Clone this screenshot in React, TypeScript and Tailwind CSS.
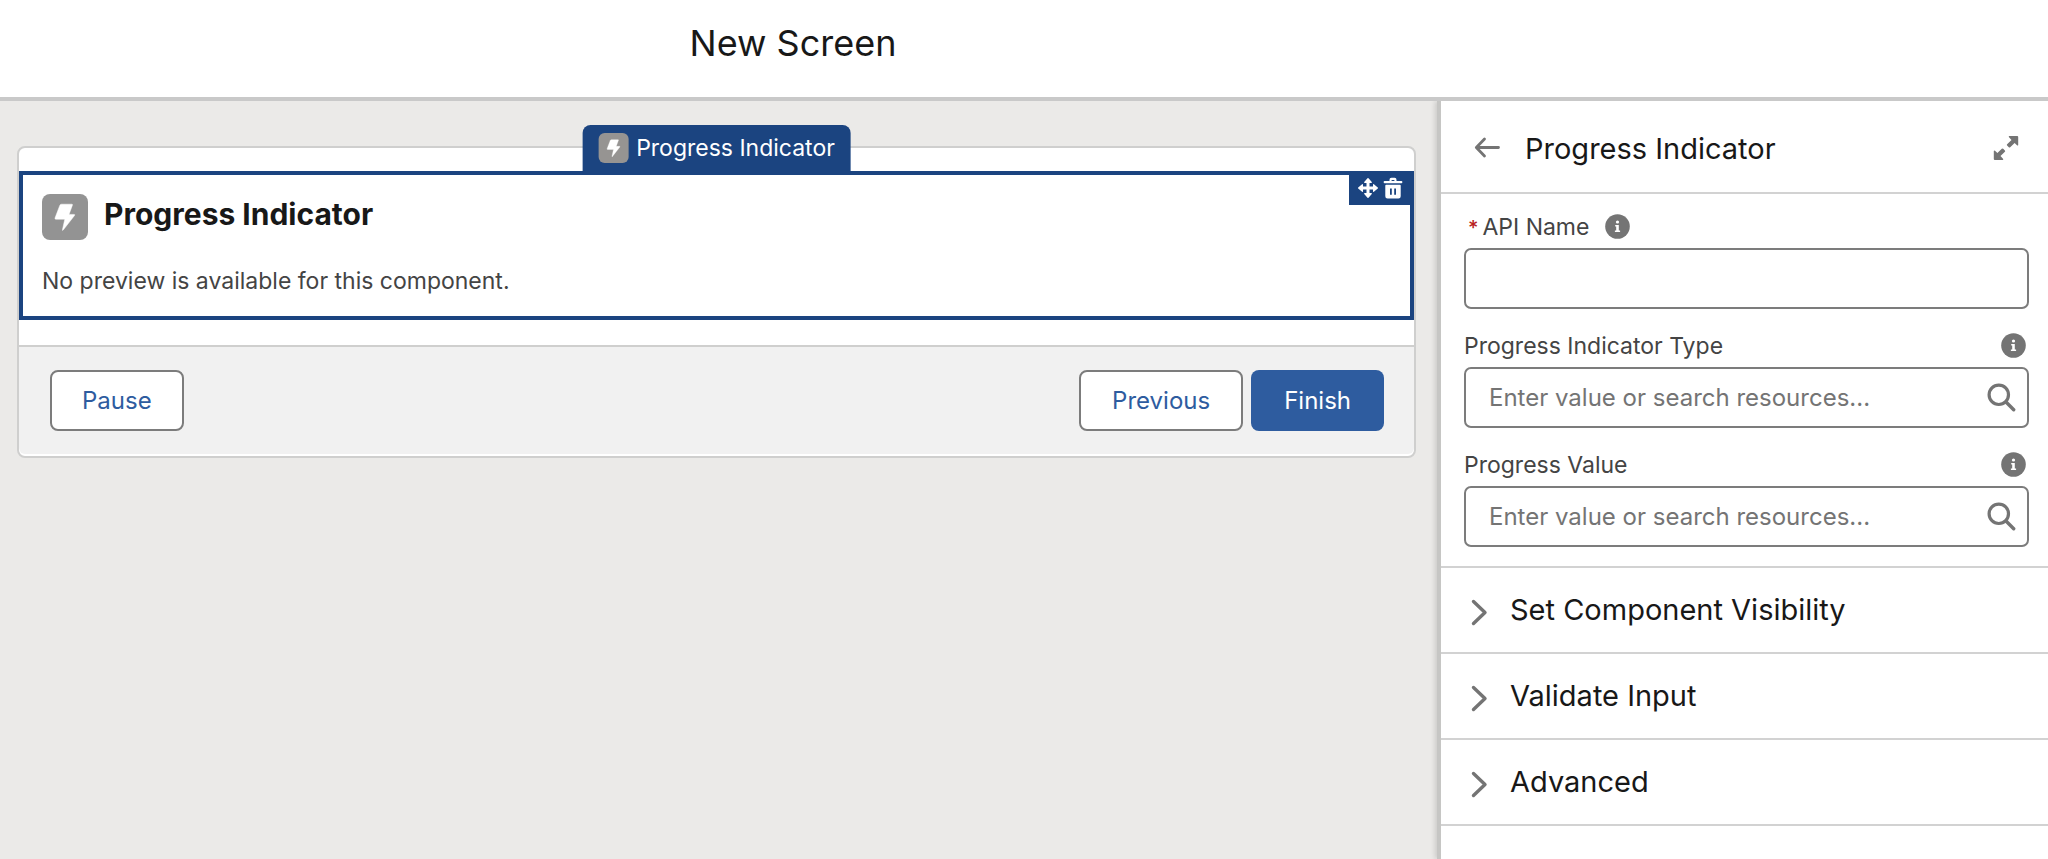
import React from "react";

function BoltIcon({ className }: { className: string }) {
  return (
    <svg viewBox="0 0 46 46" className={className} aria-hidden="true">
      <path
        d="M19.6 10.2h10.2q1 0 .6 1L27 20.4h5q1.200 0 .5 1.100L21.200 36q-1 1-.7-.4L22.800 25.200h-9q-1.200 0-.8-1.100l4.800-12.700q.500-1.200 1.800-1.200z"
        fill="#fff"
        stroke="#fff"
        strokeWidth="0.5"
      />
    </svg>
  );
}

function MoveIcon() {
  return (
    <svg viewBox="0 0 22 22" className="size-[22px]" fill="#fff" aria-hidden="true">
      <path d="M10.500 1.200q.5-.5 1 0l3.300 3.900q.4.900-.5.900h-1.800v3.500H16V7.700q0-1 .9-.5l3.900 3.300q.5.500 0 1l-3.900 3.300q-.9.500-.9-.5v-1.800h-3.500V16h1.800q.9 0 .5.900l-3.300 3.900q-.5.500-1 0l-3.300-3.900Q6.800 16 7.700 16h1.800v-3.500H6v1.800q0 1-.9.500l-3.900-3.300q-.5-.5 0-1l3.900-3.300q.9-.5.9.5v1.800h3.500V6H7.700q-.9 0-.5-.9z" />
    </svg>
  );
}

function TrashIcon() {
  return (
    <svg viewBox="0 0 20 22" className="h-[22px] w-5" fill="#fff" aria-hidden="true">
      <path
        fillRule="evenodd"
        d="M1.500 4h5V2.700Q6.500.8 8.400.8h3.200q1.900 0 1.900 1.900V4h5q.8 0 .8.800v.6q0 .8-.8.800h-17q-.8 0-.8-.8v-.6q0-.8.8-.8zM8.600 4h2.800V2.900H8.600z"
      />
      <path
        fillRule="evenodd"
        d="M3.200 7.700h13.600q.9 0 .9.900v10.600q0 2.200-2.200 2.200h-11q-2.200 0-2.200-2.200V8.600q0-.9.900-.9zM7 11.500v6.300h1.800v-6.300zM11.200 11.500v6.300H13v-6.300z"
      />
    </svg>
  );
}

function BackIcon() {
  return (
    <svg viewBox="0 0 26 22" className="h-[22px] w-[26px]" fill="none" stroke="#747474" strokeWidth="2.800" strokeLinecap="round" strokeLinejoin="round" aria-hidden="true">
      <path d="M24.500 10.500H2.500M10.500 2L2.300 10.500l8.200 8.500" />
    </svg>
  );
}

function ExpandIcon() {
  return (
    <svg viewBox="0 0 26 26" className="size-[26px]" fill="#747474" aria-hidden="true">
      <path d="M16.200 1h8q1 0 1 1v8q-.3 1-1.200.3l-2.400-2.400-4.400 4.400q-.7.600-1.400 0l-1.700-1.700q-.6-.7 0-1.400l4.400-4.300-2.500-2.600Q15.300 1.300 16.200 1z" />
      <path d="M9.800 25h-8q-1 0-1-1v-8q.3-1 1.200-.3l2.400 2.400 4.400-4.400q.7-.6 1.400 0l1.700 1.700q.6.700 0 1.400l-4.400 4.300 2.500 2.600q.7 1-.2 1.300z" />
    </svg>
  );
}

function InfoIcon() {
  return (
    <svg viewBox="0 0 25 25" className="size-[25px]" aria-hidden="true">
      <circle cx="12.500" cy="12.500" r="12.300" fill="#747474" />
      <circle cx="12.500" cy="8" r="1.600" fill="#fff" />
      <path d="M10.200 11h3.600v5.400h1.300v1.600H9.900v-1.600h1.300v-3.800h-1z" fill="#fff" />
    </svg>
  );
}

function SearchIcon() {
  return (
    <svg viewBox="0 0 29 29" className="pointer-events-none size-[29px] shrink-0" fill="none" stroke="#747474" aria-hidden="true">
      <circle cx="11.800" cy="11.800" r="9.700" strokeWidth="3.200" />
      <path d="M19 19l7.700 7.700" strokeWidth="3.400" strokeLinecap="round" />
    </svg>
  );
}

function ChevronIcon() {
  return (
    <svg viewBox="0 0 17 27" className="h-[27px] w-[17px]" fill="none" stroke="#747474" strokeWidth="3.400" strokeLinecap="round" strokeLinejoin="round" aria-hidden="true">
      <path d="M2.500 2.500l11.500 11-11.500 11" />
    </svg>
  );
}

function ResourceField({ id, label }: { id: string; label: string }) {
  return (
    <div>
      <div className="flex h-[34px] items-start justify-between pr-[3px]">
        <label htmlFor={id} className="text-[23px] leading-[26px] text-[#444]">
          {label}
        </label>
        <button type="button" aria-label={`Help for ${label}`}>
          <InfoIcon />
        </button>
      </div>
      <div className="flex h-[61px] items-center rounded-[7px] border-2 border-[#7c7c7c] bg-white pr-[11px] pl-[23px]">
        <input
          id={id}
          type="text"
          placeholder="Enter value or search resources..."
          className="min-w-0 flex-1 bg-transparent text-[24px] leading-8 outline-none placeholder:text-[#747474]"
        />
        <SearchIcon />
      </div>
    </div>
  );
}

const sections = ["Set Component Visibility", "Validate Input", "Advanced"];

export default function App() {
  return (
    <div className="flex min-h-screen flex-col bg-white font-[Inter,'Liberation_Sans',sans-serif] text-[#181818]">
      <header className="border-b-4 border-[#c9c9c9] pt-[19px] pr-[462px] pb-[30px] text-center">
        <h1 className="text-[36px] leading-[48px]">New Screen</h1>
      </header>

      <div className="flex flex-1">
        <main className="min-w-0 flex-1 bg-[#ebeae8] pt-[45px] pr-[21px] pl-[17px]">
          <section className="rounded-lg border-2 border-[#cfcfce] bg-white pb-0.5">
            <div className="relative mt-[23px] border-4 border-[#1b4480] px-[19px] pt-[19px] pb-[18px]">
              <div className="absolute bottom-full left-1/2 flex h-[50px] -translate-x-1/2 items-center gap-2 rounded-t-lg bg-[#1b4480] px-4 pb-1 whitespace-nowrap text-white">
                <span className="rounded-[6px] bg-[#969492]">
                  <BoltIcon className="size-[30px]" />
                </span>
                <span className="text-[23px] leading-7">Progress Indicator</span>
              </div>
              <div className="absolute top-0 right-0 flex h-[30px] w-[61px] items-center gap-1 bg-[#1b4480] pb-1 pl-[8px]">
                <button type="button" aria-label="Move">
                  <MoveIcon />
                </button>
                <button type="button" aria-label="Delete">
                  <TrashIcon />
                </button>
              </div>
              <div className="flex items-start gap-4">
                <span className="rounded-lg bg-[#939393]">
                  <BoltIcon className="size-[46px]" />
                </span>
                <h2 className="text-[30px] leading-10 font-bold">Progress Indicator</h2>
              </div>
              <p className="mt-[24px] text-[23px] leading-[34px] text-[#444]">
                No preview is available for this component.
              </p>
            </div>
            <footer className="mt-[25px] flex justify-between rounded-b-md border-t-2 border-[#cfcfce] bg-[#f1f1f1] pt-[23px] pr-[30px] pb-[23px] pl-[31px] text-[24px]">
              <button type="button" className="h-[61px] rounded-lg border-2 border-[#7c7c7c] bg-white px-[30px] text-[#2e5c9f]">
                Pause
              </button>
              <div className="flex gap-2">
                <button type="button" className="h-[61px] rounded-lg border-2 border-[#7c7c7c] bg-white px-[31px] text-[#2e5c9f]">
                  Previous
                </button>
                <button type="button" className="h-[61px] rounded-lg bg-[#2e5c9f] px-[33px] text-white">
                  Finish
                </button>
              </div>
            </footer>
          </section>
        </main>

        <aside className="w-[611px] shrink-0 border-l-4 border-[#c6c6c4] bg-white shadow-[-2px_0_5px_rgba(0,0,0,0.14)] [clip-path:inset(0_0_0_-12px)]">
          <div className="flex h-[93px] items-center border-b-2 border-[#d2d2d2] pt-[3px] pr-[29px] pl-[33px]">
            <button type="button" aria-label="Back">
              <BackIcon />
            </button>
            <h2 className="ml-[25px] flex-1 pt-[2px] text-[29px] leading-10">Progress Indicator</h2>
            <button type="button" aria-label="Expand panel">
              <ExpandIcon />
            </button>
          </div>

          <div className="flex flex-col gap-6 border-b-2 border-[#d2d2d2] pt-5 pr-[19px] pb-[19px] pl-[23px]">
            <div>
              <div className="flex h-[34px] items-start pl-1">
                <label htmlFor="api-name" className="text-[23px] leading-[26px] text-[#444]">
                  <span className="mr-1 text-[20px] font-medium text-[#b8201c]">*</span>API Name
                </label>
                <button type="button" aria-label="Help for API Name" className="ml-4">
                  <InfoIcon />
                </button>
              </div>
              <input
                id="api-name"
                type="text"
                className="block h-[61px] w-full rounded-[7px] border-2 border-[#7c7c7c] px-6 text-[24px] outline-none"
              />
            </div>
            <ResourceField id="indicator-type" label="Progress Indicator Type" />
            <ResourceField id="progress-value" label="Progress Value" />
          </div>

          {sections.map((name) => (
            <h3 key={name} className="border-b-2 border-[#d2d2d2]">
              <button type="button" aria-expanded="false" className="flex h-[84px] w-full items-center gap-[22px] pl-[30px] text-left text-[29px] leading-10">
                <span className="pt-1">
                  <ChevronIcon />
                </span>
                {name}
              </button>
            </h3>
          ))}
        </aside>
      </div>
    </div>
  );
}
